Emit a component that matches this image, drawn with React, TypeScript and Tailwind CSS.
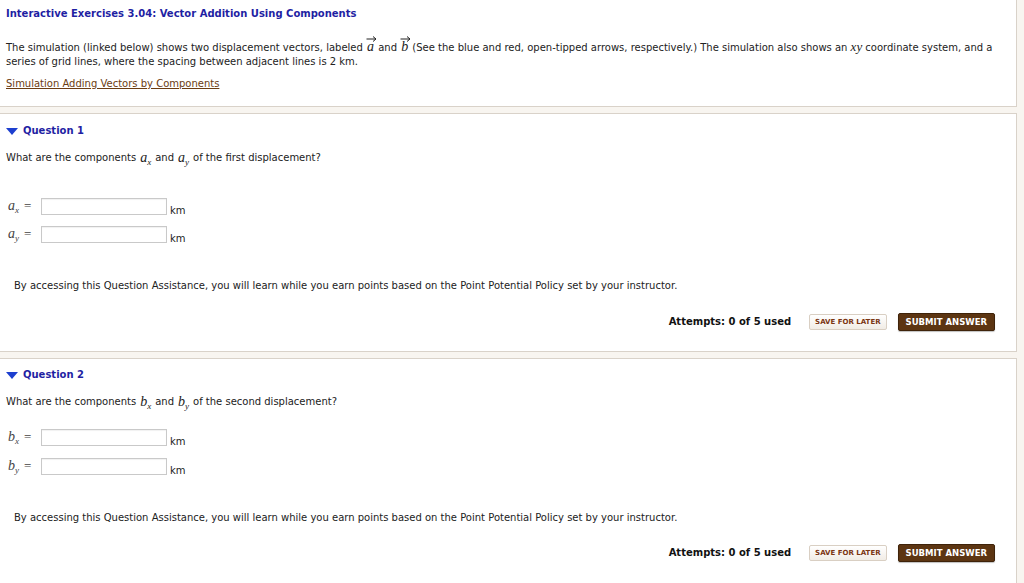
import React from "react";

const serif = { fontFamily: '"Liberation Serif", "Times New Roman", serif' };

function Vec({ ch }: { ch: string }) {
  return (
    <span className="relative inline-block italic text-[14px] leading-[10px] px-[1px]" style={serif}>
      <svg width="11" height="6" viewBox="0 0 11 6" className="absolute left-[0px] -top-[6px]">
        <line x1="0.5" y1="3" x2="10" y2="3" stroke="#222" strokeWidth="1" />
        <polyline points="7,0.5 10,3 7,5.5" fill="none" stroke="#222" strokeWidth="1" />
      </svg>
      {ch}
    </span>
  );
}

function Sub({ base, sub }: { base: string; sub: string }) {
  return (
    <span className="italic text-[14px] leading-[12px]" style={serif}>
      {base}
      <sub className="text-[9px] leading-none align-baseline relative top-[3px]">{sub}</sub>
    </span>
  );
}

function InputRow({ base, sub, mt }: { base: string; sub: string; mt: string }) {
  return (
    <div className={`flex items-start h-[17px] ${mt}`}>
      <div className="w-[41px] pl-[8px] flex items-center h-[16px] text-[#444]">
        <Sub base={base} sub={sub} />
        <span className="ml-[5px] text-[13px] leading-[12px]" style={serif}>=</span>
      </div>
      <div className="w-[126px] h-[17px] border border-[#c9c9c9] bg-white shadow-[inset_0_1px_1px_rgba(0,0,0,0.06)]" />
      <div className="ml-[3px] mt-[7px] text-[10px] leading-[12px]">km</div>
    </div>
  );
}

function Footer({ mt }: { mt: string }) {
  return (
    <div className={`flex items-center justify-end pr-[21px] ${mt}`}>
      <span className="font-bold text-[10px] text-[#111] mr-[18px]">Attempts: 0 of 5 used</span>
      <button className="h-[16px] px-[5px] mr-[11px] rounded-[2px] border border-[#d9cfc3] bg-gradient-to-b from-white to-[#f1ece5] text-[#7b3512] font-bold text-[7px] leading-none">
        SAVE FOR LATER
      </button>
      <button className="h-[18px] px-[7px] rounded-[2px] border border-[#3f230a] bg-[#5c3512] text-white font-bold text-[8.5px] leading-none shadow-[0_1px_1px_rgba(0,0,0,0.25)]">
        SUBMIT ANSWER
      </button>
    </div>
  );
}

function QuestionHeader({ n }: { n: number }) {
  return (
    <div className="flex items-center h-[14px]">
      <svg width="12" height="7" viewBox="0 0 12 7" className="ml-[6px] mr-[5px]">
        <polygon points="0,0 12,0 6,7" fill="#1d3fcf" />
      </svg>
      <span className="font-bold text-[#1f1fa3] text-[10px]">Question {n}</span>
    </div>
  );
}

export default function App() {
  return (
    <div
      className="w-[1024px] h-[583px] overflow-hidden bg-[#f8f5f0] text-[#222] text-[10px] leading-[14px]"
      style={{ fontFamily: '"DejaVu Sans", Verdana, sans-serif' }}
    >
      <div className="w-[1017px] h-[107px] bg-white border-r border-b border-[#d9d2c9] pl-[6px] pt-[7px]">
        <div className="font-bold text-[#1f1fa3]">Interactive Exercises 3.04: Vector Addition Using Components</div>
        <div className="mt-[20px]">
          <div className="h-[14px] whitespace-nowrap">
            The simulation (linked below) shows two displacement vectors, labeled <Vec ch="a" /> and <Vec ch="b" /> (See the
            blue and red, open-tipped arrows, respectively.) The simulation also shows an{" "}
            <span className="italic text-[13px] leading-[10px]" style={serif}>xy</span> coordinate system, and a
          </div>
          <div className="h-[14px]">series of grid lines, where the spacing between adjacent lines is 2 km.</div>
        </div>
        <div className="mt-[8px]">
          <a className="text-[#6b3c12] underline">Simulation Adding Vectors by Components</a>
        </div>
      </div>

      <div className="mt-[6px] w-[1017px] h-[239px] bg-white border-t border-r border-b border-[#d9d2c9] pt-[10px]">
        <QuestionHeader n={1} />
        <div className="mt-[13px] pl-[6px] flex items-center h-[14px] gap-[4px]">
          <span>What are the components</span>
          <Sub base="a" sub="x" />
          <span>and</span>
          <Sub base="a" sub="y" />
          <span>of the first displacement?</span>
        </div>
        <InputRow base="a" sub="x" mt="mt-[33px]" />
        <InputRow base="a" sub="y" mt="mt-[11px]" />
        <div className="mt-[36px] pl-[14px] text-[10px]">
          By accessing this Question Assistance, you will learn while you earn points based on the Point Potential Policy set by your instructor.
        </div>
        <Footer mt="mt-[20px]" />
      </div>

      <div className="mt-[6px] w-[1017px] h-[240px] bg-white border-t border-r border-[#d9d2c9] pt-[9px]">
        <QuestionHeader n={2} />
        <div className="mt-[13px] pl-[6px] flex items-center h-[14px] gap-[4px]">
          <span>What are the components</span>
          <Sub base="b" sub="x" />
          <span>and</span>
          <Sub base="b" sub="y" />
          <span>of the second displacement?</span>
        </div>
        <InputRow base="b" sub="x" mt="mt-[20px]" />
        <InputRow base="b" sub="y" mt="mt-[12px]" />
        <div className="mt-[36px] pl-[14px] text-[10px]">
          By accessing this Question Assistance, you will learn while you earn points based on the Point Potential Policy set by your instructor.
        </div>
        <Footer mt="mt-[19px]" />
      </div>
    </div>
  );
}
